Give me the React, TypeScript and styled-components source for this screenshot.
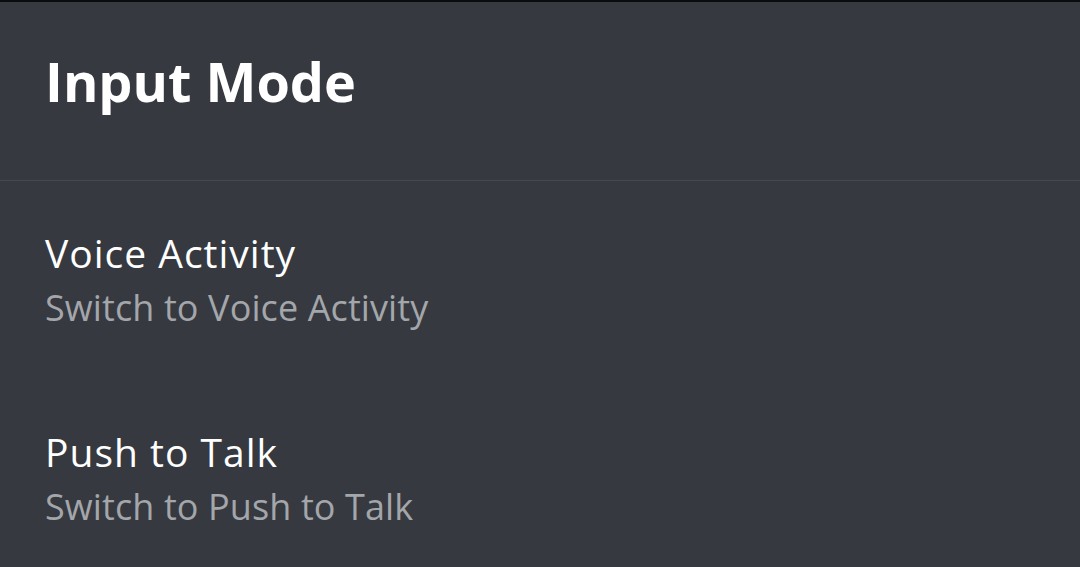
import styled, { createGlobalStyle } from "styled-components";

const GlobalStyle = createGlobalStyle`
  html, body {
    margin: 0;
    padding: 0;
    background: #36393f;
  }
  body {
    font-family: "Open Sans", "Noto Sans", sans-serif;
  }
`;

const Sheet = styled.div`
  width: 1080px;
  height: 567px;
  box-sizing: border-box;
  border-top: 2px solid #0b0c0d;
  background: #36393f;
  display: flex;
  flex-direction: column;
  overflow: hidden;
`;

const Header = styled.header`
  height: 179px;
  flex-shrink: 0;
  box-sizing: border-box;
  padding: 47px 45px 0;
  border-bottom: 1px solid #45484d;
`;

const Title = styled.h1`
  margin: 0;
  font-size: 54px;
  line-height: 64px;
  font-weight: 700;
  color: #ffffff;
`;

const Options = styled.div`
  display: flex;
  flex-direction: column;
  padding: 48px 45px 0;
  gap: 97px;
`;

const Option = styled.div`
  display: flex;
  flex-direction: column;
  gap: 8px;
  cursor: pointer;
`;

const Label = styled.div`
  font-size: 39px;
  line-height: 48px;
  letter-spacing: 1px;
  color: #ffffff;
`;

const Hint = styled.div`
  font-size: 36px;
  line-height: 46px;
  letter-spacing: 0.1px;
  color: #a3a6aa;
`;

const options = [
  { label: "Voice Activity", hint: "Switch to Voice Activity" },
  { label: "Push to Talk", hint: "Switch to Push to Talk" },
];

export default function App() {
  return (
    <>
      <GlobalStyle />
      <Sheet>
        <Header>
          <Title>Input Mode</Title>
        </Header>
        <Options>
          {options.map((o) => (
            <Option key={o.label}>
              <Label>{o.label}</Label>
              <Hint>{o.hint}</Hint>
            </Option>
          ))}
        </Options>
      </Sheet>
    </>
  );
}
